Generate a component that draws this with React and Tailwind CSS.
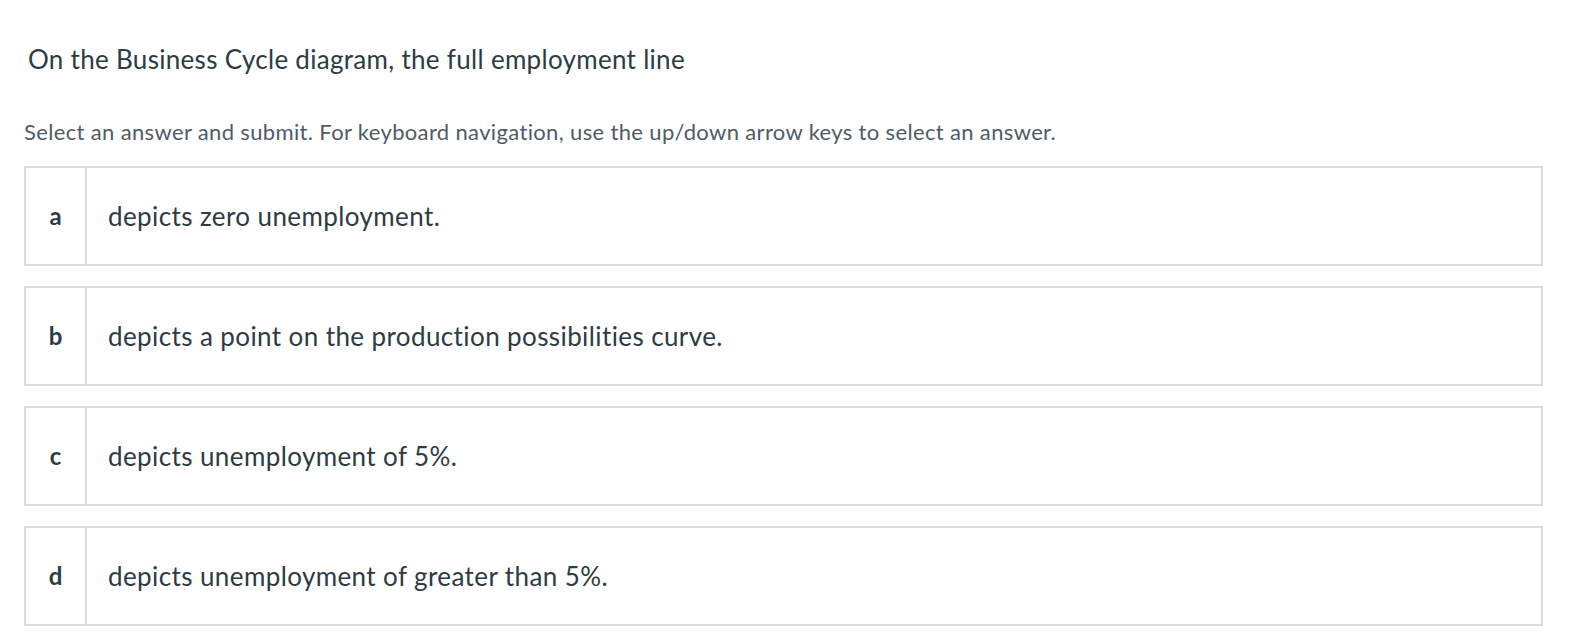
const answers = [
  { key: 'a', text: 'depicts zero unemployment.' },
  { key: 'b', text: 'depicts a point on the production possibilities curve.' },
  { key: 'c', text: 'depicts unemployment of 5%.' },
  { key: 'd', text: 'depicts unemployment of greater than 5%.' },
]

function AnswerRow({ answer }) {
  return (
    <div className="flex h-[100px] border-2 border-[#d9dde1] bg-white">
      <div className="flex w-[61px] shrink-0 items-center justify-center border-r-2 border-[#d9dde1] text-[24px] font-bold text-[#2d3b45]">
        {answer.key}
      </div>
      <div className="flex items-center pl-[21px] text-[26px] tracking-[0.4px] text-[#2d3b45]">
        {answer.text}
      </div>
    </div>
  )
}

export default function App() {
  return (
    <div className="min-h-screen bg-white font-['Lato',sans-serif]">
      <div className="pl-[24px] pr-[29px] pt-[42px]">
        <h1 className="pl-[4px] text-[26px] leading-[34px] tracking-[0.3px] text-[#2d3b45]">
          On the Business Cycle diagram, the full employment line
        </h1>
        <p className="mt-[42px] text-[22px] leading-[28px] tracking-[0.35px] text-[#4f5b66]">
          Select an answer and submit. For keyboard navigation, use the up/down arrow keys to select an answer.
        </p>
        <div className="mt-[20px] flex flex-col gap-[20px]">
          {answers.map(answer => (
            <AnswerRow key={answer.key} answer={answer} />
          ))}
        </div>
      </div>
    </div>
  )
}
